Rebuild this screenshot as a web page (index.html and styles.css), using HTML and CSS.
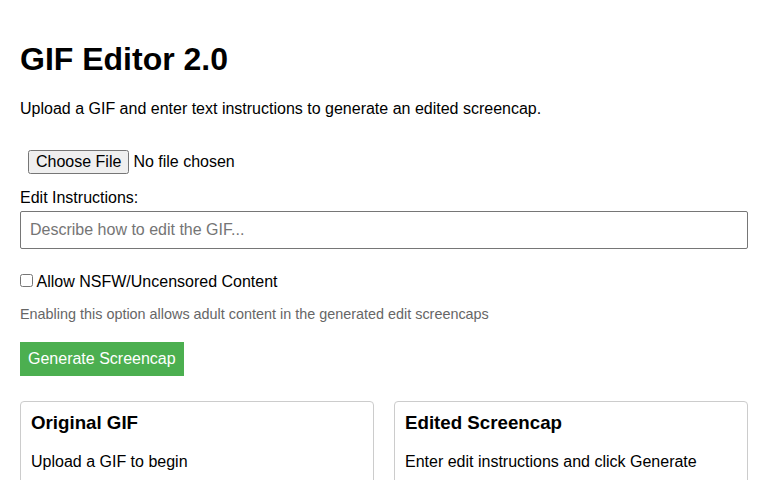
FILE: index.html
```html
<!DOCTYPE html>
<html lang="en">
<head>
<meta charset="utf-8">
<title>GIF Editor 2.0</title>
<link rel="stylesheet" href="styles.css">
</head>
<body>
<div class="app">
  <h1 class="title">GIF Editor 2.0</h1>
  <p class="intro">Upload a GIF and enter text instructions to generate an edited screencap.</p>

  <div class="upload">
    <input type="file" class="file-input" accept="image/gif">
  </div>

  <div class="field">
    <label class="field-label" for="instr">Edit Instructions:</label>
    <input type="text" id="instr" class="text-input" placeholder="Describe how to edit the GIF...">
  </div>

  <div class="nsfw">
    <label class="check-label"><input type="checkbox" class="check"> Allow NSFW/Uncensored Content</label>
    <p class="hint">Enabling this option allows adult content in the generated edit screencaps</p>
  </div>

  <button class="generate">Generate Screencap</button>

  <div class="panels">
    <section class="panel">
      <h3 class="panel-title">Original GIF</h3>
      <p class="panel-text">Upload a GIF to begin</p>
    </section>
    <section class="panel">
      <h3 class="panel-title">Edited Screencap</h3>
      <p class="panel-text">Enter edit instructions and click Generate</p>
    </section>
  </div>
</div>
</body>
</html>
```

FILE: styles.css
```css
html, body {
  margin: 0;
  padding: 0;
  background: #fff;
}
body {
  font-family: "Liberation Sans", Arial, sans-serif;
  color: #000;
}
.app {
  padding: 20px;
}
.title {
  font-size: 32px;
  margin: 21.44px 0;
}
.intro {
  font-size: 16px;
  margin: 0 0 16px;
}
.upload {
  padding: 16px 8px 0;
  margin-bottom: 15px;
}
.file-input {
  font-family: "Liberation Sans", Arial, sans-serif;
  font-size: 16px;
}
.field {
  margin-bottom: 24px;
}
.field-label {
  display: block;
  font-size: 16px;
  margin-bottom: 4px;
}
.text-input {
  display: block;
  width: 100%;
  box-sizing: border-box;
  padding: 9px 9px;
  border: 1px solid #767676;
  border-radius: 2px;
  font-family: "Liberation Sans", Arial, sans-serif;
  font-size: 16px;
  line-height: 18px;
}
.nsfw {
  margin-bottom: 20px;
}
.check-label {
  font-size: 16px;
}
.check {
  margin: 0;
}
.hint {
  font-size: 14.4px;
  color: #666;
  margin: 15px 0 0;
}
.generate {
  background: #4caf50;
  color: #fff;
  border: none;
  padding: 8px 8px;
  font-family: "Liberation Sans", Arial, sans-serif;
  font-size: 16px;
  cursor: pointer;
}
.panels {
  display: grid;
  grid-template-columns: 1fr 1fr;
  gap: 20px;
  margin-top: 25px;
}
.panel {
  border: 1px solid #ccc;
  border-radius: 4px;
  padding: 10px;
}
.panel-title {
  font-size: 18.72px;
  margin: 0 0 18.72px;
}
.panel-text {
  font-size: 16px;
  margin: 0 0 16px;
}
```
